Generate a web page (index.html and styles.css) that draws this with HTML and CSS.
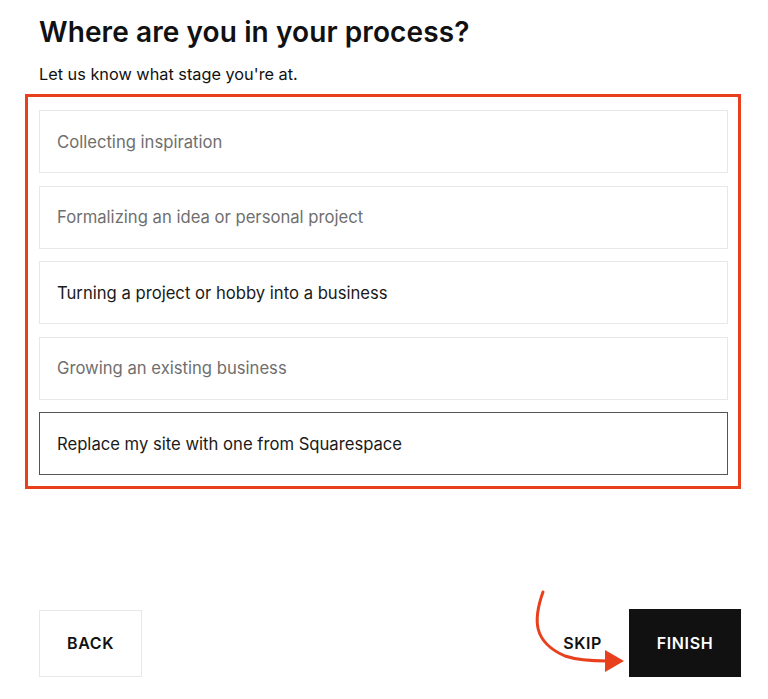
FILE: index.html
```html
<!DOCTYPE html>
<html>
<head>
<meta charset="utf-8">
<link rel="stylesheet" href="styles.css">
</head>
<body>
<main class="page">
  <h1 class="title">Where are you in your process?</h1>
  <p class="subtitle">Let us know what stage you're at.</p>
  <div class="annot">
    <ul class="options">
      <li class="option">Collecting inspiration</li>
      <li class="option">Formalizing an idea or personal project</li>
      <li class="option option-hover">Turning a project or hobby into a business</li>
      <li class="option">Growing an existing business</li>
      <li class="option option-selected">Replace my site with one from Squarespace</li>
    </ul>
  </div>
  <footer class="footer">
    <button class="btn btn-back">BACK</button>
    <div class="right">
      <button class="btn btn-skip">SKIP</button>
      <button class="btn btn-finish">FINISH</button>
    </div>
    <svg class="arrow" width="110" height="100" viewBox="0 0 110 100">
      <path d="M18 12 C 8 40, 8 62, 40 76 C 52 80, 64 81, 82 81" fill="none" stroke="#e8401c" stroke-width="3" stroke-linecap="round"/>
      <polygon points="80,70 99,81 80,92" fill="#e8401c"/>
    </svg>
  </footer>
</main>
</body>
</html>
```
FILE: styles.css
```css
* { box-sizing: border-box; }
html, body { margin: 0; padding: 0; background: #fff; }
body {
  font-family: Inter, "Liberation Sans", Arial, sans-serif;
  color: #111;
  width: 768px;
  height: 699px;
  overflow: hidden;
}
.page {
  padding: 15px 27px 0 39px;
  display: flex;
  flex-direction: column;
}
.title {
  margin: 0;
  font-size: 28px;
  line-height: 34px;
  font-weight: 600;
  color: #111;
  letter-spacing: 0.1px;
}
.subtitle {
  margin: 15px 0 0;
  font-size: 16.3px;
  line-height: 20px;
  color: #111;
}
.annot {
  margin: 10px 0 0 -14px;
  border: 3px solid #e8401c;
  padding: 13px 10px 11px 11px;
}
.options {
  list-style: none;
  margin: 0;
  padding: 0;
  display: flex;
  flex-direction: column;
  gap: 12.5px;
}
.option {
  height: 63px;
  border: 1px solid #e8e8e8;
  display: flex;
  align-items: center;
  padding-left: 17px;
  font-size: 16.65px;
  color: #6f6f6f;
}
.option-hover { color: #1a1a1a; }
.option-selected { border-color: #555; color: #1a1a1a; }
.footer {
  position: relative;
  margin-top: 120px;
  display: flex;
  justify-content: space-between;
  align-items: center;
}
.right {
  display: flex;
  align-items: center;
}
.btn {
  font-family: inherit;
  font-weight: 600;
  font-size: 16px;
  letter-spacing: 0.6px;
  background: #fff;
  color: #111;
  cursor: pointer;
  border: 0;
}
.btn-back {
  width: 103px;
  height: 67px;
  border: 1px solid #e8e8e8;
}
.btn-skip {
  padding: 0;
  margin-right: 27px;
}
.btn-finish {
  width: 112px;
  height: 68px;
  background: #111;
  color: #fff;
}
.arrow {
  position: absolute;
  left: 486px;
  top: -29px;
}
```
